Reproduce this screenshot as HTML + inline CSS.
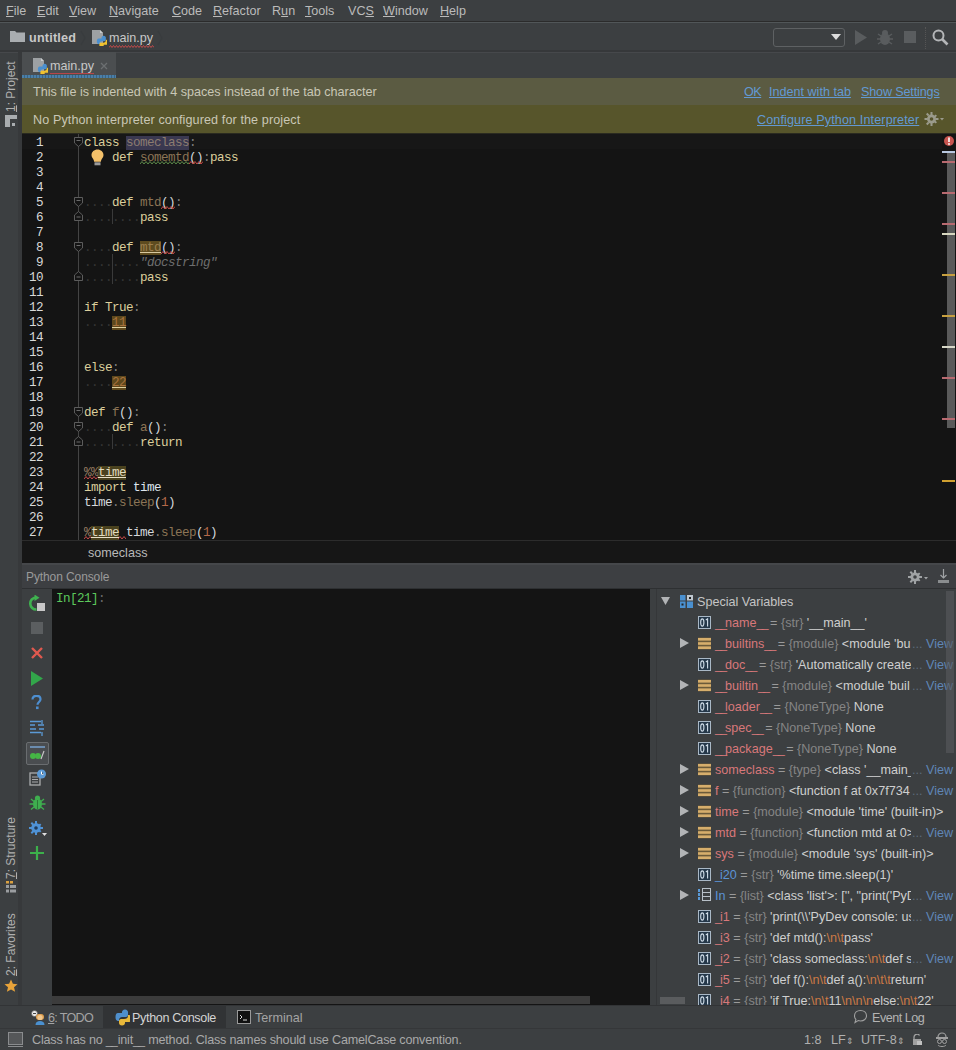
<!DOCTYPE html>
<html><head><meta charset="utf-8">
<style>
*{margin:0;padding:0;box-sizing:border-box}
html,body{width:956px;height:1050px;overflow:hidden;background:#3c3f41;font-family:"Liberation Sans",sans-serif;font-size:12.6px;color:#bbbbbb}
.a{position:absolute}
.t{position:absolute;white-space:pre;line-height:14px}
.mono{font-family:"Liberation Mono",monospace}
i.us{font-style:normal;letter-spacing:-2px}
u{text-decoration:underline;text-underline-offset:1px}
</style></head><body>

<!-- menu bar -->
<div class="a" style="left:0;top:0;width:956px;height:21px;background:#3c3f41"></div>
<div class="t" style="left:6px;top:4px;color:#bbbbbb"><u>F</u>ile</div>
<div class="t" style="left:37px;top:4px"><u>E</u>dit</div>
<div class="t" style="left:69px;top:4px"><u>V</u>iew</div>
<div class="t" style="left:109px;top:4px"><u>N</u>avigate</div>
<div class="t" style="left:172px;top:4px"><u>C</u>ode</div>
<div class="t" style="left:213px;top:4px"><u>R</u>efactor</div>
<div class="t" style="left:272px;top:4px">R<u>u</u>n</div>
<div class="t" style="left:305px;top:4px"><u>T</u>ools</div>
<div class="t" style="left:348px;top:4px">VC<u>S</u></div>
<div class="t" style="left:383px;top:4px"><u>W</u>indow</div>
<div class="t" style="left:440px;top:4px"><u>H</u>elp</div>
<div class="a" style="left:0;top:21px;width:956px;height:1px;background:#2b2b2b"></div>
<div class="a" style="left:0;top:22px;width:956px;height:1px;background:#515658"></div>

<!-- nav bar -->
<svg class="a" style="left:10px;top:31px" width="15" height="11" viewBox="0 0 15 11"><path d="M0 0h5l1.5 1.5H15V11H0z" fill="#a9adb0"/></svg>
<div class="t" style="left:29px;top:31px;font-weight:bold;color:#c8c8c8;letter-spacing:0.2px">untitled</div>
<svg class="a" style="left:80px;top:30px" width="6" height="16" viewBox="0 0 6 16"><path d="M1 1l4 7-4 7" stroke="#393c3e" stroke-width="1.3" fill="none"/></svg>
<svg class="a pyic" style="left:92px;top:29px" width="15" height="17" viewBox="0 0 15 17"><path d="M0 1h8l3 3v11H0z" fill="#9da1a4"/><path d="M8 1v3h3" fill="#c8cbcd"/><g transform="translate(4.5 6.5) scale(0.72)"><path d="M4 12c0-3 1-4 4-4h3c1 0 2-1 2-2V3c0-1-1-2.5-3-2.5S7 2 7 3v1H3c-2 0-2.5 2-2.5 4s.5 4 3.5 4z" fill="#4a90d0"/><path d="M13 6c0 3-1 4-4 4H6c-1 0-2 1-2 2v2c0 1 1 2.5 3 2.5s3-1.5 3-2.5v-1h4c2 0 2.5-2 2.5-4s-.5-3-3.5-3z" fill="#f0c330"/></g></svg>
<div class="t" style="left:109px;top:31px;color:#c8c8c8">main.py</div>
<svg class="a" style="left:109px;top:45px" width="45" height="3" viewBox="0 0 45 3"><path d="M0 2.5l1.5-2 1.5 2 1.5-2 1.5 2 1.5-2 1.5 2 1.5-2 1.5 2 1.5-2 1.5 2 1.5-2 1.5 2 1.5-2 1.5 2 1.5-2 1.5 2 1.5-2 1.5 2 1.5-2 1.5 2 1.5-2 1.5 2 1.5-2 1.5 2 1.5-2 1.5 2 1.5-2 1.5 2 1.5-2 1.5 2" stroke="#c24b4b" stroke-width="1" fill="none"/></svg>
<svg class="a" style="left:157px;top:30px" width="6" height="16" viewBox="0 0 6 16"><path d="M1 1l4 7-4 7" stroke="#393c3e" stroke-width="1.2" fill="none"/></svg>
<!-- right toolbar -->
<div class="a" style="left:773px;top:28px;width:72px;height:19px;border:1px solid #5e6163;border-radius:3px;background:#3c3f41"></div>
<svg class="a" style="left:831px;top:34px" width="10" height="7" viewBox="0 0 10 7"><path d="M0 0h10L5 6z" fill="#dcdcdc"/></svg>
<svg class="a" style="left:854px;top:30px" width="14" height="15" viewBox="0 0 14 15"><path d="M1 0l12 7.5L1 15z" fill="#595c5e"/></svg>
<svg class="a" style="left:876px;top:29px" width="18" height="17" viewBox="0 0 18 17"><ellipse cx="9" cy="10" rx="5" ry="6" fill="#595c5e"/><circle cx="9" cy="4" r="3" fill="#595c5e"/><path d="M2 5l3 2M16 5l-3 2M1 10h4M17 10h-4M2 15l3-2M16 15l-3-2" stroke="#595c5e" stroke-width="1.5"/></svg>
<div class="a" style="left:904px;top:31px;width:12px;height:12px;background:#5a5d5f"></div>
<div class="a" style="left:925px;top:27px;width:1px;height:22px;border-left:1px dotted #555"></div>
<svg class="a" style="left:932px;top:29px" width="17" height="17" viewBox="0 0 17 17"><circle cx="6.5" cy="6.5" r="5" stroke="#b4b6b8" stroke-width="2" fill="none"/><path d="M10 10l5.5 5.5" stroke="#b4b6b8" stroke-width="2.6"/></svg>
<div class="a" style="left:0;top:50px;width:956px;height:2px;background:#36383a"></div>
<div class="a" style="left:0;top:52px;width:956px;height:1px;background:#46484b"></div>

<!-- left tool strip -->
<div class="a" style="left:18px;top:52px;width:4px;height:954px;background:#37393b"></div><div class="a" style="left:22px;top:52px;width:1px;height:954px;background:#525456"></div>
<div class="t" style="left:4px;top:112px;transform-origin:0 0;transform:rotate(-90deg);color:#b0b0b0;font-size:12px"><u>1</u>: Project</div>
<div class="t" style="left:4px;top:879px;transform-origin:0 0;transform:rotate(-90deg);color:#b0b0b0;font-size:12px"><u>7</u>: Structure</div>
<div class="t" style="left:4px;top:976px;transform-origin:0 0;transform:rotate(-90deg);color:#b0b0b0;font-size:12px"><u>2</u>: Favorites</div>

<!-- tab bar -->
<div class="a" style="left:22px;top:52px;width:94px;height:26px;background:#4b4e50"></div>
<svg class="a" style="left:33px;top:57px" width="15" height="17" viewBox="0 0 15 17"><path d="M0 1h8l3 3v11H0z" fill="#9da1a4"/><path d="M8 1v3h3" fill="#c8cbcd"/><g transform="translate(4.5 6.5) scale(0.72)"><path d="M4 12c0-3 1-4 4-4h3c1 0 2-1 2-2V3c0-1-1-2.5-3-2.5S7 2 7 3v1H3c-2 0-2.5 2-2.5 4s.5 4 3.5 4z" fill="#4a90d0"/><path d="M13 6c0 3-1 4-4 4H6c-1 0-2 1-2 2v2c0 1 1 2.5 3 2.5s3-1.5 3-2.5v-1h4c2 0 2.5-2 2.5-4s-.5-3-3.5-3z" fill="#f0c330"/></g></svg>
<div class="t" style="left:50px;top:59px;color:#c8c8c8">main.py</div>
<div class="a" style="left:50px;top:73px;width:44px;height:1px;background:#b8454a"></div>
<svg class="a" style="left:100px;top:62px" width="8" height="8" viewBox="0 0 8 8"><path d="M1 1l6 6M7 1L1 7" stroke="#6c6f71" stroke-width="1.3"/></svg>
<div class="a" style="left:22px;top:75px;width:94px;height:3px;background:repeating-linear-gradient(90deg,#4a7fa8 0 2px,#3b6383 2px 3px)"></div>

<!-- banners -->
<div class="a" style="left:22px;top:78px;width:934px;height:27px;background:#5b5b42"></div>
<div class="t" style="left:33px;top:85px;color:#c9c7b6;letter-spacing:0px">This file is indented with 4 spaces instead of the tab character</div>
<div class="t" style="left:744px;top:85px;color:#6299d3;letter-spacing:-0.5px"><u>OK</u></div>
<div class="t" style="left:769px;top:85px;color:#6299d3"><u>Indent with tab</u></div>
<div class="t" style="left:861px;top:85px;color:#6299d3;letter-spacing:-0.15px"><u>Show Settings</u></div>
<div class="a" style="left:22px;top:105px;width:934px;height:28px;background:#57552b"></div>
<div class="t" style="left:33px;top:113px;color:#c9c7b6;letter-spacing:0.1px">No Python interpreter configured for the project</div>
<div class="t" style="left:757px;top:113px;color:#6299d3;letter-spacing:0.12px"><u>Configure Python Interpreter</u></div>
<svg class="a" style="left:924px;top:111px" width="20" height="16" viewBox="0 0 20 16"><g fill="#9b9b8c"><circle cx="7.5" cy="8" r="4.5"/><path d="M6.5 1h2v3h-2zM6.5 12h2v3h-2zM0.5 7h3v2h-3zM11.5 7h3v2h-3zM2 3.2l1.4-1.4 2 2-1.4 1.4zM9.6 10.6l1.4-1.4 2 2-1.4 1.4zM2 12.8l2-2 1.4 1.4-2 2zM9.6 5.4l2-2 1.4 1.4-2 2z"/></g><circle cx="7.5" cy="8" r="1.8" fill="#55532b"/><path d="M16 7h4l-2 2.5z" fill="#9b9b8c"/></svg>

<!-- editor -->
<div class="a" style="left:22px;top:133px;width:934px;height:1px;background:#2a2a20"></div>
<div class="a" style="left:22px;top:134px;width:934px;height:406px;background:#141414"></div>
<div class="a" style="left:22px;top:134px;width:920px;height:15px;background:#171717"></div>
<div class="a mono" style="left:22px;top:136px;width:21px;text-align:right;font-size:12.6px;letter-spacing:-0.56px;line-height:15px;color:#d9d9d9"><div style="height:15px">1</div><div style="height:15px">2</div><div style="height:15px">3</div><div style="height:15px">4</div><div style="height:15px">5</div><div style="height:15px">6</div><div style="height:15px">7</div><div style="height:15px">8</div><div style="height:15px">9</div><div style="height:15px">10</div><div style="height:15px">11</div><div style="height:15px">12</div><div style="height:15px">13</div><div style="height:15px">14</div><div style="height:15px">15</div><div style="height:15px">16</div><div style="height:15px">17</div><div style="height:15px">18</div><div style="height:15px">19</div><div style="height:15px">20</div><div style="height:15px">21</div><div style="height:15px">22</div><div style="height:15px">23</div><div style="height:15px">24</div><div style="height:15px">25</div><div style="height:15px">26</div><div style="height:15px">27</div></div>
<div class="a" style="left:78px;top:134px;width:1px;height:406px;background:#444"></div>
<div class="a mono" style="left:84px;top:136px;white-space:pre;font-size:12.6px;letter-spacing:-0.56px;line-height:15px;color:#d5d8dc"><div style="height:15px"><span style="color:#dccf9c;">class </span><span style="color:#8c7c70;background:#3a3850">someclass</span><span style="color:#7d7d7d;">:</span></div><div style="height:15px">    <span style="color:#dccf9c;">def </span><span style="color:#8c7456;">somemtd</span><span style="color:#d5d8dc;">()</span><span style="color:#7d7d7d;">:</span><span style="color:#dccf9c;">pass</span></div><div style="height:15px"></div><div style="height:15px"></div><div style="height:15px"><span style="color:#343434;">....</span><span style="color:#dccf9c;">def </span><span style="color:#8c7456;">mtd</span><span style="color:#d5d8dc;">()</span><span style="color:#7d7d7d;">:</span></div><div style="height:15px"><span style="color:#343434;">........</span><span style="color:#dccf9c;">pass</span></div><div style="height:15px"></div><div style="height:15px"><span style="color:#343434;">....</span><span style="color:#dccf9c;">def </span><span style="color:#9c7f4f;background:#5e4b1f">mtd</span><span style="color:#c9d3f0;">(</span><span style="color:#d5d8dc;">)</span><span style="color:#7d7d7d;">:</span></div><div style="height:15px"><span style="color:#343434;">........</span><span style="color:#6e6e6e;font-style:italic">"docstring"</span></div><div style="height:15px"><span style="color:#343434;">........</span><span style="color:#dccf9c;">pass</span></div><div style="height:15px"></div><div style="height:15px"><span style="color:#dccf9c;">if </span><span style="color:#dccf9c;">True</span><span style="color:#7d7d7d;">:</span></div><div style="height:15px"><span style="color:#343434;">....</span><span style="color:#a8723e;background:#5e481c">11</span></div><div style="height:15px"></div><div style="height:15px"></div><div style="height:15px"><span style="color:#dccf9c;">else</span><span style="color:#7d7d7d;">:</span></div><div style="height:15px"><span style="color:#343434;">....</span><span style="color:#a8723e;background:#5e481c">22</span></div><div style="height:15px"></div><div style="height:15px"><span style="color:#dccf9c;">def </span><span style="color:#8c7456;">f</span><span style="color:#d5d8dc;">()</span><span style="color:#7d7d7d;">:</span></div><div style="height:15px"><span style="color:#343434;">....</span><span style="color:#dccf9c;">def </span><span style="color:#8c7456;">a</span><span style="color:#d5d8dc;">()</span><span style="color:#7d7d7d;">:</span></div><div style="height:15px"><span style="color:#343434;">........</span><span style="color:#dccf9c;">return</span></div><div style="height:15px"></div><div style="height:15px"><span style="color:#9a7e62;">%%</span><span style="color:#e2dcc0;background:#4a421e">time</span></div><div style="height:15px"><span style="color:#dccf9c;">import </span><span style="color:#dfe6ee;">time</span></div><div style="height:15px"><span style="color:#d5d8dc;">time</span><span style="color:#7d7d7d;">.</span><span style="color:#8c7456;">sleep</span><span style="color:#d5d8dc;">(</span><span style="color:#b5694a;">1</span><span style="color:#d5d8dc;">)</span></div><div style="height:15px"></div><div style="height:15px"><span style="color:#9a7e62;">%</span><span style="color:#e2dcc0;background:#4a421e">time</span><span style="color:#343434;"> </span><span style="color:#d5d8dc;">time</span><span style="color:#7d7d7d;">.</span><span style="color:#8c7456;">sleep</span><span style="color:#d5d8dc;">(</span><span style="color:#b5694a;">1</span><span style="color:#d5d8dc;">)</span></div></div>
<div class="a" style="left:112px;top:209px;width:1px;height:15px;background:#3a3a3a"></div>
<div class="a" style="left:112px;top:254px;width:1px;height:15px;background:#3a3a3a"></div>
<div class="a" style="left:112px;top:269px;width:1px;height:15px;background:#3a3a3a"></div>
<div class="a" style="left:112px;top:434px;width:1px;height:15px;background:#3a3a3a"></div>
<svg class="a" style="left:74px;top:137px" width="9" height="10" viewBox="0 0 9 10"><path d="M0.5 0.5h8v5.5l-4 3.5-4-3.5z" fill="#141414" stroke="#5c5c5c"/><path d="M2.5 3.5h4" stroke="#6a6a6a"/></svg>
<svg class="a" style="left:74px;top:197px" width="9" height="10" viewBox="0 0 9 10"><path d="M0.5 0.5h8v5.5l-4 3.5-4-3.5z" fill="#141414" stroke="#5c5c5c"/><path d="M2.5 3.5h4" stroke="#6a6a6a"/></svg>
<svg class="a" style="left:74px;top:242px" width="9" height="10" viewBox="0 0 9 10"><path d="M0.5 0.5h8v5.5l-4 3.5-4-3.5z" fill="#141414" stroke="#5c5c5c"/><path d="M2.5 3.5h4" stroke="#6a6a6a"/></svg>
<svg class="a" style="left:74px;top:407px" width="9" height="10" viewBox="0 0 9 10"><path d="M0.5 0.5h8v5.5l-4 3.5-4-3.5z" fill="#141414" stroke="#5c5c5c"/><path d="M2.5 3.5h4" stroke="#6a6a6a"/></svg>
<svg class="a" style="left:74px;top:422px" width="9" height="10" viewBox="0 0 9 10"><path d="M0.5 0.5h8v5.5l-4 3.5-4-3.5z" fill="#141414" stroke="#5c5c5c"/><path d="M2.5 3.5h4" stroke="#6a6a6a"/></svg>
<svg class="a" style="left:74px;top:211px" width="9" height="10" viewBox="0 0 9 10"><path d="M0.5 9.5h8v-5.5l-4-3.5-4 3.5z" fill="#141414" stroke="#5c5c5c"/><path d="M2.5 6h4" stroke="#6a6a6a"/></svg>
<svg class="a" style="left:74px;top:271px" width="9" height="10" viewBox="0 0 9 10"><path d="M0.5 9.5h8v-5.5l-4-3.5-4 3.5z" fill="#141414" stroke="#5c5c5c"/><path d="M2.5 6h4" stroke="#6a6a6a"/></svg>
<svg class="a" style="left:74px;top:436px" width="9" height="10" viewBox="0 0 9 10"><path d="M0.5 9.5h8v-5.5l-4-3.5-4 3.5z" fill="#141414" stroke="#5c5c5c"/><path d="M2.5 6h4" stroke="#6a6a6a"/></svg>
<svg class="a" style="left:91px;top:149px" width="13" height="17" viewBox="0 0 13 17"><path d="M6.5 0.5c3.3 0 6 2.4 6 5.6 0 2.3-1.5 3.5-2.2 4.9-.3.6-.4 1.3-.4 1.8H3.1c0-.5-.1-1.2-.4-1.8C2 9.6.5 8.4.5 6.1.5 2.9 3.2.5 6.5.5z" fill="#f3c06a"/><rect x="3.5" y="13.3" width="6" height="3" fill="#9a9a9a"/></svg>
<svg class="a" style="left:140px;top:161px" width="49" height="4" viewBox="0 0 49 4"><path d="M0 3 L2 0.5 L4 3 L6 0.5 L8 3 L10 0.5 L12 3 L14 0.5 L16 3 L18 0.5 L20 3 L22 0.5 L24 3 L26 0.5 L28 3 L30 0.5 L32 3 L34 0.5 L36 3 L38 0.5 L40 3 L42 0.5 L44 3 L46 0.5 L48 3 L50 0.5" stroke="#5d8a4a" stroke-width="1" fill="none"/></svg>
<svg class="a" style="left:189px;top:161px" width="14" height="4" viewBox="0 0 14 4"><path d="M0 3 L2 0.5 L4 3 L6 0.5 L8 3 L10 0.5 L12 3 L14 0.5" stroke="#c84a4a" stroke-width="1" fill="none"/></svg>
<svg class="a" style="left:161px;top:206px" width="14" height="4" viewBox="0 0 14 4"><path d="M0 3 L2 0.5 L4 3 L6 0.5 L8 3 L10 0.5 L12 3 L14 0.5" stroke="#c84a4a" stroke-width="1" fill="none"/></svg>
<svg class="a" style="left:161px;top:251px" width="14" height="4" viewBox="0 0 14 4"><path d="M0 3 L2 0.5 L4 3 L6 0.5 L8 3 L10 0.5 L12 3 L14 0.5" stroke="#c84a4a" stroke-width="1" fill="none"/></svg>
<svg class="a" style="left:84px;top:476px" width="14" height="4" viewBox="0 0 14 4"><path d="M0 3 L2 0.5 L4 3 L6 0.5 L8 3 L10 0.5 L12 3 L14 0.5" stroke="#c84a4a" stroke-width="1" fill="none"/></svg>
<svg class="a" style="left:84px;top:536px" width="7" height="4" viewBox="0 0 7 4"><path d="M0 3 L2 0.5 L4 3 L6 0.5 L8 3" stroke="#c84a4a" stroke-width="1" fill="none"/></svg>
<svg class="a" style="left:118px;top:536px" width="8" height="4" viewBox="0 0 8 4"><path d="M0 3 L2 0.5 L4 3 L6 0.5 L8 3" stroke="#c84a4a" stroke-width="1" fill="none"/></svg>
<div class="a" style="left:140px;top:252px;width:21px;height:1px;background:#d8c9a0"></div>
<div class="a" style="left:112px;top:327px;width:14px;height:1px;background:#e0d0a0"></div>
<div class="a" style="left:112px;top:387px;width:14px;height:1px;background:#e0d0a0"></div>
<div class="a" style="left:98px;top:477px;width:28px;height:1px;background:#e8e0c8"></div>
<div class="a" style="left:91px;top:537px;width:28px;height:1px;background:#e8e0c8"></div>
<svg class="a" style="left:943px;top:135px" width="12" height="12" viewBox="0 0 12 12"><circle cx="6" cy="6" r="5" fill="#c85550"/><path d="M6 2.5v4.5" stroke="#fff" stroke-width="1.6"/><circle cx="6" cy="9" r="0.9" fill="#fff"/></svg>
<div class="a" style="left:947px;top:151px;width:8px;height:277px;background:#5a5a5a"></div>
<div class="a" style="left:942px;top:151px;width:13px;height:2px;background:#b8c8e0"></div>
<div class="a" style="left:942px;top:161px;width:13px;height:2px;background:#b86a70"></div>
<div class="a" style="left:942px;top:192px;width:13px;height:2px;background:#b86a70"></div>
<div class="a" style="left:942px;top:223px;width:13px;height:2px;background:#b86a70"></div>
<div class="a" style="left:942px;top:233px;width:13px;height:2px;background:#d8d8c0"></div>
<div class="a" style="left:942px;top:274px;width:13px;height:2px;background:#c8a040"></div>
<div class="a" style="left:942px;top:315px;width:13px;height:2px;background:#c8a040"></div>
<div class="a" style="left:942px;top:346px;width:13px;height:2px;background:#d8d8c8"></div>
<div class="a" style="left:942px;top:377px;width:13px;height:2px;background:#b86a70"></div>
<div class="a" style="left:942px;top:418px;width:13px;height:2px;background:#b86a70"></div>
<div class="a" style="left:942px;top:480px;width:13px;height:2px;background:#d0a030"></div>
<!-- console -->
<div class="a" style="left:22px;top:540px;width:934px;height:1px;background:#2c2c2c"></div>
<div class="a" style="left:22px;top:541px;width:934px;height:23px;background:#161616"></div>
<div class="t" style="left:88px;top:546px;color:#b9b9b9">someclass</div>
<div class="a" style="left:22px;top:563px;width:934px;height:25px;background:#3d3f42"></div>
<div class="a" style="left:22px;top:563px;width:934px;height:2px;background:#45474a"></div>
<div class="t" style="left:26px;top:570px;color:#9a9a9a;font-size:12px;letter-spacing:-0.1px">Python Console</div>
<svg class="a" style="left:907px;top:569px" width="22" height="16" viewBox="0 0 22 16"><g fill="#a0a3a5"><circle cx="8" cy="8" r="4.6"/><path d="M7 1h2v3H7zM7 12h2v3H7zM1 7h3v2H1zM12 7h3v2h-3zM2.6 3.4l1.4-1.4 2 2-1.4 1.4zM10 10.6l1.4-1.4 2 2-1.4 1.4zM2.6 12.6l2-2 1.4 1.4-2 2zM10 5.4l2-2 1.4 1.4-2 2z"/></g><circle cx="8" cy="8" r="1.8" fill="#3e4143"/><path d="M17 8h4l-2 2.5z" fill="#a0a3a5"/></svg>
<svg class="a" style="left:937px;top:568px" width="13" height="16" viewBox="0 0 13 16"><path d="M6.5 1v9M3.5 7l3 3 3-3" stroke="#a0a3a5" stroke-width="1.2" fill="none"/><rect x="1" y="12" width="11" height="3" fill="#8a8d8f"/></svg>
<div class="a" style="left:22px;top:588px;width:934px;height:1px;background:#2e3032"></div>
<div class="a" style="left:22px;top:589px;width:30px;height:417px;background:#3c3f41"></div>
<div class="a" style="left:52px;top:589px;width:598px;height:416px;background:#141414"></div>
<div class="t mono" style="left:56px;top:592px;font-size:12.6px;letter-spacing:-0.56px;line-height:15px;color:#5cc85c">In[21]<span style="color:#6a6a6a">:</span></div>
<div class="a" style="left:52px;top:996px;width:538px;height:8px;background:#3c3c3c"></div>
<div class="a" style="left:650px;top:589px;width:6px;height:417px;background:#3c3f41"></div>
<div class="a" style="left:656px;top:589px;width:1px;height:416px;background:#353739"></div>
<div class="a" style="left:657px;top:589px;width:299px;height:416px;background:#3c3f41"></div>
<div class="a" style="left:660px;top:997px;width:25px;height:7px;background:#5a5c5e"></div>
<svg class="a" style="left:661px;top:597px" width="9" height="10" viewBox="0 0 9 10"><path d="M0 0h9l-4.5 8z" fill="#b2b4b6"/></svg>
<svg class="a" style="left:680px;top:595px" width="13" height="13" viewBox="0 0 13 13"><rect x="0" y="0" width="5.5" height="5.5" fill="#4a90d0"/><rect x="0" y="6.5" width="5.5" height="6.5" fill="#4a90d0"/><rect x="7" y="0" width="6" height="5.5" fill="#c0c8d0"/><rect x="7" y="6.5" width="6" height="6.5" fill="#4a90d0"/><rect x="1.5" y="8.5" width="2" height="2" fill="#222"/><rect x="9" y="2" width="2" height="2" fill="#222"/></svg>
<div class="t" style="left:697px;top:595px;color:#c5c5c5">Special Variables</div>
<svg class="a" style="left:698px;top:616px" width="13" height="13" viewBox="0 0 13 13"><rect x="0.5" y="0.5" width="12" height="12" fill="#25384a" stroke="#a9b8c6"/><g fill="none" stroke="#d0dde8" stroke-width="1.1"><ellipse cx="4.3" cy="6.5" rx="1.6" ry="3.6"/><path d="M7.8 4l1.8-1.2v7.8"/></g></svg>
<div class="t vr" style="left:715px;top:616px"><span style="color:#d8787a"><i class="us">_</i><i class="us">_</i>name<i class="us">_</i><i class="us">_</i></span> <span style="color:#9a9a9a">=</span> <span style="color:#858585">{str}</span> <span style="color:#cfcfcf">'__main__'</span></div>
<svg class="a" style="left:680px;top:638px" width="9" height="10" viewBox="0 0 9 10"><path d="M0 0l9 5-9 5z" fill="#b2b4b6"/></svg>
<svg class="a" style="left:698px;top:637px" width="13" height="13" viewBox="0 0 13 13"><rect x="0" y="0.5" width="13" height="12" fill="#6a5a3a"/><g fill="#d6ae6c"><rect x="0" y="1" width="13" height="2.6"/><rect x="0" y="5.2" width="13" height="2.6"/><rect x="0" y="9.4" width="13" height="2.6"/></g></svg>
<div class="t vr" style="left:715px;top:637px"><span style="color:#d8787a"><i class="us">_</i><i class="us">_</i>builtins<i class="us">_</i><i class="us">_</i></span> <span style="color:#9a9a9a">=</span> <span style="color:#858585">{module}</span> <span style="color:#cfcfcf">&lt;module 'bu</span></div>
<div class="t" style="left:911px;top:637px;width:43px;overflow:hidden;background:#3c3f41;padding-left:15px;color:#5f86b6"><span style="position:absolute;left:1px;color:#5d6b7a">...</span>View</div>
<svg class="a" style="left:698px;top:658px" width="13" height="13" viewBox="0 0 13 13"><rect x="0.5" y="0.5" width="12" height="12" fill="#25384a" stroke="#a9b8c6"/><g fill="none" stroke="#d0dde8" stroke-width="1.1"><ellipse cx="4.3" cy="6.5" rx="1.6" ry="3.6"/><path d="M7.8 4l1.8-1.2v7.8"/></g></svg>
<div class="t vr" style="left:715px;top:658px"><span style="color:#d8787a"><i class="us">_</i><i class="us">_</i>doc<i class="us">_</i><i class="us">_</i></span> <span style="color:#9a9a9a">=</span> <span style="color:#858585">{str}</span> <span style="color:#cfcfcf">'Automatically create</span></div>
<div class="t" style="left:911px;top:658px;width:43px;overflow:hidden;background:#3c3f41;padding-left:15px;color:#5f86b6"><span style="position:absolute;left:1px;color:#5d6b7a">...</span>View</div>
<svg class="a" style="left:680px;top:680px" width="9" height="10" viewBox="0 0 9 10"><path d="M0 0l9 5-9 5z" fill="#b2b4b6"/></svg>
<svg class="a" style="left:698px;top:679px" width="13" height="13" viewBox="0 0 13 13"><rect x="0" y="0.5" width="13" height="12" fill="#6a5a3a"/><g fill="#d6ae6c"><rect x="0" y="1" width="13" height="2.6"/><rect x="0" y="5.2" width="13" height="2.6"/><rect x="0" y="9.4" width="13" height="2.6"/></g></svg>
<div class="t vr" style="left:715px;top:679px"><span style="color:#d8787a"><i class="us">_</i><i class="us">_</i>builtin<i class="us">_</i><i class="us">_</i></span> <span style="color:#9a9a9a">=</span> <span style="color:#858585">{module}</span> <span style="color:#cfcfcf">&lt;module 'buil</span></div>
<div class="t" style="left:911px;top:679px;width:43px;overflow:hidden;background:#3c3f41;padding-left:15px;color:#5f86b6"><span style="position:absolute;left:1px;color:#5d6b7a">...</span>View</div>
<svg class="a" style="left:698px;top:700px" width="13" height="13" viewBox="0 0 13 13"><rect x="0.5" y="0.5" width="12" height="12" fill="#25384a" stroke="#a9b8c6"/><g fill="none" stroke="#d0dde8" stroke-width="1.1"><ellipse cx="4.3" cy="6.5" rx="1.6" ry="3.6"/><path d="M7.8 4l1.8-1.2v7.8"/></g></svg>
<div class="t vr" style="left:715px;top:700px"><span style="color:#d8787a"><i class="us">_</i><i class="us">_</i>loader<i class="us">_</i><i class="us">_</i></span> <span style="color:#9a9a9a">=</span> <span style="color:#858585">{NoneType}</span> <span style="color:#cfcfcf">None</span></div>
<svg class="a" style="left:698px;top:721px" width="13" height="13" viewBox="0 0 13 13"><rect x="0.5" y="0.5" width="12" height="12" fill="#25384a" stroke="#a9b8c6"/><g fill="none" stroke="#d0dde8" stroke-width="1.1"><ellipse cx="4.3" cy="6.5" rx="1.6" ry="3.6"/><path d="M7.8 4l1.8-1.2v7.8"/></g></svg>
<div class="t vr" style="left:715px;top:721px"><span style="color:#d8787a"><i class="us">_</i><i class="us">_</i>spec<i class="us">_</i><i class="us">_</i></span> <span style="color:#9a9a9a">=</span> <span style="color:#858585">{NoneType}</span> <span style="color:#cfcfcf">None</span></div>
<svg class="a" style="left:698px;top:742px" width="13" height="13" viewBox="0 0 13 13"><rect x="0.5" y="0.5" width="12" height="12" fill="#25384a" stroke="#a9b8c6"/><g fill="none" stroke="#d0dde8" stroke-width="1.1"><ellipse cx="4.3" cy="6.5" rx="1.6" ry="3.6"/><path d="M7.8 4l1.8-1.2v7.8"/></g></svg>
<div class="t vr" style="left:715px;top:742px"><span style="color:#d8787a"><i class="us">_</i><i class="us">_</i>package<i class="us">_</i><i class="us">_</i></span> <span style="color:#9a9a9a">=</span> <span style="color:#858585">{NoneType}</span> <span style="color:#cfcfcf">None</span></div>
<svg class="a" style="left:680px;top:764px" width="9" height="10" viewBox="0 0 9 10"><path d="M0 0l9 5-9 5z" fill="#b2b4b6"/></svg>
<svg class="a" style="left:698px;top:763px" width="13" height="13" viewBox="0 0 13 13"><rect x="0" y="0.5" width="13" height="12" fill="#6a5a3a"/><g fill="#d6ae6c"><rect x="0" y="1" width="13" height="2.6"/><rect x="0" y="5.2" width="13" height="2.6"/><rect x="0" y="9.4" width="13" height="2.6"/></g></svg>
<div class="t vr" style="left:715px;top:763px"><span style="color:#d8787a">someclass</span> <span style="color:#9a9a9a">=</span> <span style="color:#858585">{type}</span> <span style="color:#cfcfcf">&lt;class '__main__</span></div>
<div class="t" style="left:911px;top:763px;width:43px;overflow:hidden;background:#3c3f41;padding-left:15px;color:#5f86b6"><span style="position:absolute;left:1px;color:#5d6b7a">...</span>View</div>
<svg class="a" style="left:680px;top:785px" width="9" height="10" viewBox="0 0 9 10"><path d="M0 0l9 5-9 5z" fill="#b2b4b6"/></svg>
<svg class="a" style="left:698px;top:784px" width="13" height="13" viewBox="0 0 13 13"><rect x="0" y="0.5" width="13" height="12" fill="#6a5a3a"/><g fill="#d6ae6c"><rect x="0" y="1" width="13" height="2.6"/><rect x="0" y="5.2" width="13" height="2.6"/><rect x="0" y="9.4" width="13" height="2.6"/></g></svg>
<div class="t vr" style="left:715px;top:784px"><span style="color:#d8787a">f</span> <span style="color:#9a9a9a">=</span> <span style="color:#858585">{function}</span> <span style="color:#cfcfcf">&lt;function f at 0x7f734</span></div>
<div class="t" style="left:911px;top:784px;width:43px;overflow:hidden;background:#3c3f41;padding-left:15px;color:#5f86b6"><span style="position:absolute;left:1px;color:#5d6b7a">...</span>View</div>
<svg class="a" style="left:680px;top:806px" width="9" height="10" viewBox="0 0 9 10"><path d="M0 0l9 5-9 5z" fill="#b2b4b6"/></svg>
<svg class="a" style="left:698px;top:805px" width="13" height="13" viewBox="0 0 13 13"><rect x="0" y="0.5" width="13" height="12" fill="#6a5a3a"/><g fill="#d6ae6c"><rect x="0" y="1" width="13" height="2.6"/><rect x="0" y="5.2" width="13" height="2.6"/><rect x="0" y="9.4" width="13" height="2.6"/></g></svg>
<div class="t vr" style="left:715px;top:805px"><span style="color:#d8787a">time</span> <span style="color:#9a9a9a">=</span> <span style="color:#858585">{module}</span> <span style="color:#cfcfcf">&lt;module 'time' (built-in)&gt;</span></div>
<svg class="a" style="left:680px;top:827px" width="9" height="10" viewBox="0 0 9 10"><path d="M0 0l9 5-9 5z" fill="#b2b4b6"/></svg>
<svg class="a" style="left:698px;top:826px" width="13" height="13" viewBox="0 0 13 13"><rect x="0" y="0.5" width="13" height="12" fill="#6a5a3a"/><g fill="#d6ae6c"><rect x="0" y="1" width="13" height="2.6"/><rect x="0" y="5.2" width="13" height="2.6"/><rect x="0" y="9.4" width="13" height="2.6"/></g></svg>
<div class="t vr" style="left:715px;top:826px"><span style="color:#d8787a">mtd</span> <span style="color:#9a9a9a">=</span> <span style="color:#858585">{function}</span> <span style="color:#cfcfcf">&lt;function mtd at 0&gt;</span></div>
<div class="t" style="left:911px;top:826px;width:43px;overflow:hidden;background:#3c3f41;padding-left:15px;color:#5f86b6"><span style="position:absolute;left:1px;color:#5d6b7a">...</span>View</div>
<svg class="a" style="left:680px;top:848px" width="9" height="10" viewBox="0 0 9 10"><path d="M0 0l9 5-9 5z" fill="#b2b4b6"/></svg>
<svg class="a" style="left:698px;top:847px" width="13" height="13" viewBox="0 0 13 13"><rect x="0" y="0.5" width="13" height="12" fill="#6a5a3a"/><g fill="#d6ae6c"><rect x="0" y="1" width="13" height="2.6"/><rect x="0" y="5.2" width="13" height="2.6"/><rect x="0" y="9.4" width="13" height="2.6"/></g></svg>
<div class="t vr" style="left:715px;top:847px"><span style="color:#d8787a">sys</span> <span style="color:#9a9a9a">=</span> <span style="color:#858585">{module}</span> <span style="color:#cfcfcf">&lt;module 'sys' (built-in)&gt;</span></div>
<svg class="a" style="left:698px;top:868px" width="13" height="13" viewBox="0 0 13 13"><rect x="0.5" y="0.5" width="12" height="12" fill="#25384a" stroke="#a9b8c6"/><g fill="none" stroke="#d0dde8" stroke-width="1.1"><ellipse cx="4.3" cy="6.5" rx="1.6" ry="3.6"/><path d="M7.8 4l1.8-1.2v7.8"/></g></svg>
<div class="t vr" style="left:715px;top:868px"><span style="color:#5b93d6"><i class="us">_</i>i20</span> <span style="color:#9a9a9a">=</span> <span style="color:#858585">{str}</span> <span style="color:#cfcfcf">'%time time.sleep(1)'</span></div>
<svg class="a" style="left:680px;top:890px" width="9" height="10" viewBox="0 0 9 10"><path d="M0 0l9 5-9 5z" fill="#b2b4b6"/></svg>
<svg class="a" style="left:697px;top:888px" width="14" height="14" viewBox="0 0 14 14"><g fill="none" stroke="#b8c0c8"><rect x="5.5" y="0.5" width="8" height="4"/><rect x="5.5" y="4.5" width="8" height="4"/><rect x="5.5" y="8.5" width="8" height="4"/></g><g fill="#5a9ad8"><rect x="1" y="1" width="2" height="3"/><rect x="1" y="5" width="2" height="3"/><rect x="1" y="9" width="2" height="3"/></g></svg>
<div class="t vr" style="left:715px;top:889px"><span style="color:#5b93d6">In</span> <span style="color:#9a9a9a">=</span> <span style="color:#858585">{list}</span> <span style="color:#cfcfcf">&lt;class 'list'&gt;: ['', "print('PyD</span></div>
<div class="t" style="left:911px;top:889px;width:43px;overflow:hidden;background:#3c3f41;padding-left:15px;color:#5f86b6"><span style="position:absolute;left:1px;color:#5d6b7a">...</span>View</div>
<svg class="a" style="left:698px;top:910px" width="13" height="13" viewBox="0 0 13 13"><rect x="0.5" y="0.5" width="12" height="12" fill="#25384a" stroke="#a9b8c6"/><g fill="none" stroke="#d0dde8" stroke-width="1.1"><ellipse cx="4.3" cy="6.5" rx="1.6" ry="3.6"/><path d="M7.8 4l1.8-1.2v7.8"/></g></svg>
<div class="t vr" style="left:715px;top:910px"><span style="color:#d8787a"><i class="us">_</i>i1</span> <span style="color:#9a9a9a">=</span> <span style="color:#858585">{str}</span> <span style="color:#cfcfcf">'print(\\'PyDev console: us</span></div>
<div class="t" style="left:911px;top:910px;width:43px;overflow:hidden;background:#3c3f41;padding-left:15px;color:#5f86b6"><span style="position:absolute;left:1px;color:#5d6b7a">...</span>View</div>
<svg class="a" style="left:698px;top:931px" width="13" height="13" viewBox="0 0 13 13"><rect x="0.5" y="0.5" width="12" height="12" fill="#25384a" stroke="#a9b8c6"/><g fill="none" stroke="#d0dde8" stroke-width="1.1"><ellipse cx="4.3" cy="6.5" rx="1.6" ry="3.6"/><path d="M7.8 4l1.8-1.2v7.8"/></g></svg>
<div class="t vr" style="left:715px;top:931px"><span style="color:#d8787a"><i class="us">_</i>i3</span> <span style="color:#9a9a9a">=</span> <span style="color:#858585">{str}</span> <span style="color:#cfcfcf">'def mtd():<span style="color:#cc7a45">\n</span><span style="color:#cc7a45">\t</span>pass'</span></div>
<svg class="a" style="left:698px;top:952px" width="13" height="13" viewBox="0 0 13 13"><rect x="0.5" y="0.5" width="12" height="12" fill="#25384a" stroke="#a9b8c6"/><g fill="none" stroke="#d0dde8" stroke-width="1.1"><ellipse cx="4.3" cy="6.5" rx="1.6" ry="3.6"/><path d="M7.8 4l1.8-1.2v7.8"/></g></svg>
<div class="t vr" style="left:715px;top:952px"><span style="color:#d8787a"><i class="us">_</i>i2</span> <span style="color:#9a9a9a">=</span> <span style="color:#858585">{str}</span> <span style="color:#cfcfcf">'class someclass:<span style="color:#cc7a45">\n</span><span style="color:#cc7a45">\t</span>def s</span></div>
<div class="t" style="left:911px;top:952px;width:43px;overflow:hidden;background:#3c3f41;padding-left:15px;color:#5f86b6"><span style="position:absolute;left:1px;color:#5d6b7a">...</span>View</div>
<svg class="a" style="left:698px;top:973px" width="13" height="13" viewBox="0 0 13 13"><rect x="0.5" y="0.5" width="12" height="12" fill="#25384a" stroke="#a9b8c6"/><g fill="none" stroke="#d0dde8" stroke-width="1.1"><ellipse cx="4.3" cy="6.5" rx="1.6" ry="3.6"/><path d="M7.8 4l1.8-1.2v7.8"/></g></svg>
<div class="t vr" style="left:715px;top:973px"><span style="color:#d8787a"><i class="us">_</i>i5</span> <span style="color:#9a9a9a">=</span> <span style="color:#858585">{str}</span> <span style="color:#cfcfcf">'def f():<span style="color:#cc7a45">\n</span><span style="color:#cc7a45">\t</span>def a():<span style="color:#cc7a45">\n</span><span style="color:#cc7a45">\t</span><span style="color:#cc7a45">\t</span>return'</span></div>
<svg class="a" style="left:698px;top:994px" width="13" height="13" viewBox="0 0 13 13"><rect x="0.5" y="0.5" width="12" height="12" fill="#25384a" stroke="#a9b8c6"/><g fill="none" stroke="#d0dde8" stroke-width="1.1"><ellipse cx="4.3" cy="6.5" rx="1.6" ry="3.6"/><path d="M7.8 4l1.8-1.2v7.8"/></g></svg>
<div class="t vr" style="left:715px;top:994px"><span style="color:#d8787a"><i class="us">_</i>i4</span> <span style="color:#9a9a9a">=</span> <span style="color:#858585">{str}</span> <span style="color:#cfcfcf">'if True:<span style="color:#cc7a45">\n</span><span style="color:#cc7a45">\t</span>11<span style="color:#cc7a45">\n</span><span style="color:#cc7a45">\n</span><span style="color:#cc7a45">\n</span>else:<span style="color:#cc7a45">\n</span><span style="color:#cc7a45">\t</span>22'</span></div>
<div class="a" style="left:946px;top:591px;width:8px;height:162px;background:rgba(88,90,93,0.6)"></div>
<!-- bottom -->
<!-- console toolbar icons -->
<svg class="a" style="left:28px;top:595px" width="18" height="17" viewBox="0 0 18 17"><path d="M8 2.5A6 6 0 1 0 8.5 14.5" stroke="#3fb24f" stroke-width="2.6" fill="none"/><path d="M6.5 -0.5l5 3.2-5 3.2z" fill="#3fb24f"/><rect x="9" y="8" width="8" height="8" fill="#c8c8c8"/></svg>
<div class="a" style="left:31px;top:622px;width:12px;height:12px;background:#5b5e60"></div>
<svg class="a" style="left:31px;top:647px" width="12" height="12" viewBox="0 0 12 12"><path d="M1 1l10 10M11 1L1 11" stroke="#e0594f" stroke-width="2.4"/></svg>
<svg class="a" style="left:31px;top:671px" width="12" height="15" viewBox="0 0 12 15"><path d="M0 0l12 7.5L0 15z" fill="#32a64a"/></svg>
<svg class="a" style="left:31px;top:695px" width="11" height="15" viewBox="0 0 11 15"><path d="M1.5 4.5C1.5 2 3.4 0.8 5.5 0.8S9.5 2 9.5 4.3c0 2.6-3 2.8-3 5.4" stroke="#4d8ed0" stroke-width="2.2" fill="none"/><rect x="5" y="11.5" width="2.6" height="2.6" fill="#4d8ed0"/></svg>
<svg class="a" style="left:29px;top:720px" width="16" height="16" viewBox="0 0 16 16"><g fill="none" stroke="#5b9ad6" stroke-width="1.3"><path d="M1 1.5h11M1 5h5M9 5h6M1 9h6M10 9h5M1 12.5h11"/><path d="M13 0v4M13 12v4"/></g></svg>
<div class="a" style="left:26px;top:742px;width:23px;height:23px;border:1px solid #6a6d70;background:#4a4d50;border-radius:2px"></div>
<svg class="a" style="left:29px;top:746px" width="17" height="15" viewBox="0 0 17 15"><path d="M1 1h15" stroke="#7aa8d8" stroke-width="1.4"/><circle cx="4" cy="10" r="3" fill="#45b545"/><circle cx="9" cy="10" r="3" fill="#45b545"/><path d="M12 13l3-8" stroke="#c8c8c8" stroke-width="1.2"/></svg>
<svg class="a" style="left:29px;top:769px" width="18" height="17" viewBox="0 0 18 17"><rect x="1" y="4" width="10" height="12" fill="#3c3f41" stroke="#a9abad" stroke-width="1.3"/><path d="M3 8h6M3 10.5h6M3 13h6" stroke="#a9abad"/><circle cx="12.5" cy="5" r="4.5" fill="#5b9ad6"/><path d="M12.5 2.5v2.7h2" stroke="#fff" stroke-width="1"/></svg>
<svg class="a" style="left:29px;top:794px" width="17" height="17" viewBox="0 0 17 17"><ellipse cx="8.5" cy="10" rx="4.5" ry="5.5" fill="#3fae4f"/><circle cx="8.5" cy="4" r="2.6" fill="#3fae4f"/><path d="M2 5l3 2.5M15 5l-3 2.5M0.5 10h4M16.5 10h-4M2 15.5l3-2.5M15 15.5l-3-2.5" stroke="#3fae4f" stroke-width="1.4"/><path d="M8.5 6v9" stroke="#2a6a32" stroke-width="0.8"/></svg>
<svg class="a" style="left:28px;top:820px" width="19" height="17" viewBox="0 0 19 17"><g fill="#4f92d6"><circle cx="8" cy="8" r="4.8"/><path d="M7 1h2v3H7zM7 12h2v3H7zM1 7h3v2H1zM12 7h3v2h-3zM2.6 3.4l1.4-1.4 2 2-1.4 1.4zM10 10.6l1.4-1.4 2 2-1.4 1.4zM2.6 12.6l2-2 1.4 1.4-2 2zM10 5.4l2-2 1.4 1.4-2 2z"/></g><circle cx="8" cy="8" r="1.8" fill="#1e3a5a"/><path d="M14 13h5l-2.5 3z" fill="#e0e0e0"/></svg>
<svg class="a" style="left:30px;top:846px" width="14" height="14" viewBox="0 0 14 14"><path d="M7 0v14M0 7h14" stroke="#3cb04b" stroke-width="2.2"/></svg>

<!-- left strip icons -->
<svg class="a" style="left:5px;top:115px" width="13" height="12" viewBox="0 0 13 12"><rect x="0" y="0" width="12" height="4" fill="#a9adb0"/><rect x="0" y="4" width="5" height="8" fill="#a9adb0"/><rect x="7" y="8" width="3" height="3" fill="#a9adb0"/></svg>
<svg class="a" style="left:5px;top:880px" width="12" height="14" viewBox="0 0 12 14"><rect x="1" y="1" width="3" height="2.5" fill="#d9a040"/><rect x="5" y="1" width="3" height="2.5" fill="#d9a040"/><rect x="1" y="5" width="3" height="3" fill="#9a9da0"/><rect x="5" y="5" width="6" height="3" fill="#9a9da0"/><rect x="1" y="9.5" width="3" height="3" fill="#9a9da0"/><rect x="5" y="9.5" width="6" height="3" fill="#9a9da0"/></svg>
<svg class="a" style="left:4px;top:979px" width="14" height="14" viewBox="0 0 14 14"><path d="M7 0.5l1.9 4.3 4.6.4-3.5 3 1.1 4.6L7 10.4l-4.1 2.4 1.1-4.6-3.5-3 4.6-.4z" fill="#e8a33a"/></svg>

<!-- bottom tool window bar -->
<div class="a" style="left:0;top:1005px;width:956px;height:1px;background:#323436"></div>
<div class="a" style="left:0;top:1006px;width:956px;height:22px;background:#3c3f41"></div>
<div class="a" style="left:103px;top:1006px;width:123px;height:22px;background:#313335"></div>
<svg class="a" style="left:31px;top:1010px" width="15" height="15" viewBox="0 0 15 15"><circle cx="3.5" cy="3.5" r="3" fill="#e8e8e8" stroke="#555" stroke-width="0.6"/><path d="M2 3.5h3" stroke="#333" stroke-width="0.9"/><rect x="5" y="4" width="8" height="6" rx="3" fill="#e0a050"/><circle cx="9" cy="7.5" r="2.6" fill="#f0c890"/><path d="M4.5 15c0-3 2-4 4.5-4s4.5 1 4.5 4z" fill="#4a90d0"/></svg>
<div class="t" style="left:48px;top:1011px;color:#a4a4a4;letter-spacing:-0.7px"><u>6</u>: TODO</div>
<svg class="a" style="left:115px;top:1009px" width="15" height="17" viewBox="0 0 15 17"><path d="M4 12c0-3 1-4 4-4h3c1 0 2-1 2-2V3c0-1-1-2.5-3-2.5S7 2 7 3v1H3c-2 0-2.5 2-2.5 4s.5 4 3.5 4z" fill="#4f8fcc"/><path d="M13 6c0 3-1 4-4 4H6c-1 0-2 1-2 2v2c0 1 1 2.5 3 2.5s3-1.5 3-2.5v-1h4c2 0 2.5-2 2.5-4s-.5-3-3.5-3z" fill="#e8b83a"/></svg>
<div class="t" style="left:132px;top:1011px;color:#d4d4d4;letter-spacing:-0.35px">Python Console</div>
<svg class="a" style="left:237px;top:1010px" width="14" height="14" viewBox="0 0 14 14"><rect x="0.5" y="0.5" width="13" height="13" fill="#111" stroke="#9a9a9a"/><path d="M3 5l2 2-2 2M6 10h4" stroke="#ddd" stroke-width="1"/></svg>
<div class="t" style="left:255px;top:1011px;color:#a4a4a4">Terminal</div>
<svg class="a" style="left:853px;top:1009px" width="15" height="15" viewBox="0 0 15 15"><path d="M7.5 1.5c3.5 0 6 2.3 6 5.3s-2.5 5.2-6 5.2c-.8 0-1.6-.1-2.3-.4L2 13.5l.9-3C1.9 9.5 1.5 8.2 1.5 6.8c0-3 2.5-5.3 6-5.3z" fill="none" stroke="#a0a0a0" stroke-width="1.1"/></svg>
<div class="t" style="left:872px;top:1011px;color:#b4b4b4;letter-spacing:-0.5px">Event Log</div>
<!-- status bar -->
<div class="a" style="left:0;top:1028px;width:956px;height:1px;background:#353739"></div>
<div class="a" style="left:0;top:1029px;width:956px;height:21px;background:#3c3f41"></div>
<svg class="a" style="left:8px;top:1032px" width="15" height="15" viewBox="0 0 15 15"><rect x="0.5" y="0.5" width="14" height="12" fill="#555759" stroke="#8a8c8e"/><path d="M0 14.5h15" stroke="#8a8c8e"/></svg>
<div class="t" style="left:32px;top:1033px;color:#a9a9a9;letter-spacing:-0.19px">Class has no <i class="us">_</i>_init<i class="us">_</i>_ method. Class names should use CamelCase convention.</div>
<div class="t" style="left:804px;top:1033px;color:#b0b0b0">1:8</div>
<div class="t" style="left:831px;top:1033px;color:#b0b0b0">LF<span style="font-size:9px">&#8661;</span></div>
<div class="t" style="left:861px;top:1033px;color:#b0b0b0">UTF-8<span style="font-size:9px">&#8661;</span></div>
<svg class="a" style="left:912px;top:1034px" width="11" height="12" viewBox="0 0 11 12"><path d="M2 5V3a3 3 0 0 1 5.5-1.5" stroke="#a0a0a0" stroke-width="1.3" fill="none"/><rect x="1" y="5" width="8" height="6" fill="#a0a0a0"/><rect x="5" y="7" width="5" height="4" fill="#c0c0c0"/></svg>
<svg class="a" style="left:935px;top:1032px" width="14" height="16" viewBox="0 0 14 16"><path d="M3 5a4 4 0 0 1 8 0" stroke="#a0a0a0" stroke-width="1.2" fill="none"/><rect x="1" y="5" width="12" height="2" fill="#a0a0a0"/><circle cx="4.5" cy="9.5" r="2" fill="none" stroke="#a0a0a0"/><circle cx="9.5" cy="9.5" r="2" fill="none" stroke="#a0a0a0"/><path d="M3 13c1 2 7 2 8 0" stroke="#a0a0a0" fill="none"/></svg>
</body></html>
